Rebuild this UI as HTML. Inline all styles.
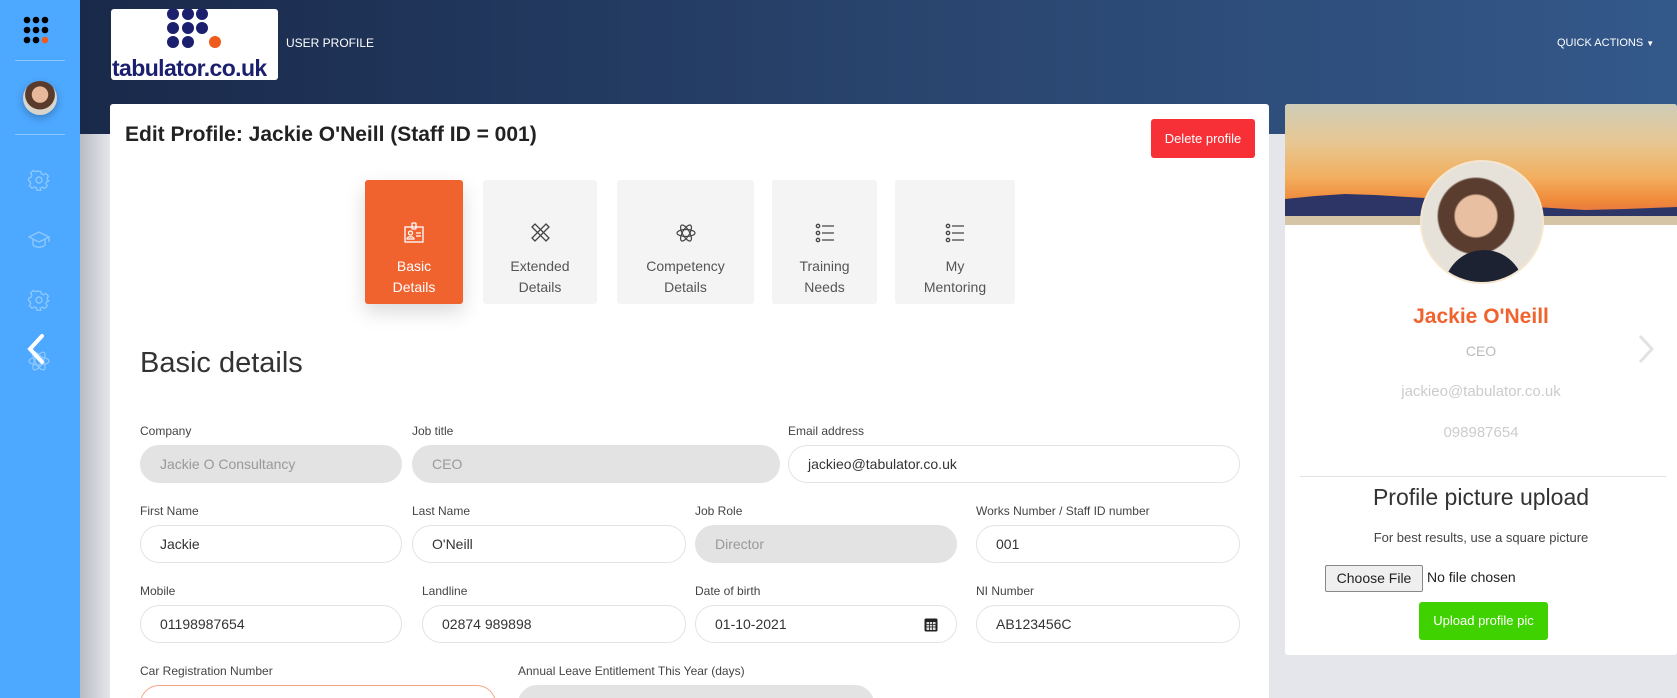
<!DOCTYPE html>
<html style="overflow:hidden;width:1677px;height:698px"><head><meta charset="utf-8"><style>
*{box-sizing:border-box;margin:0;padding:0}
body{width:1677px;height:698px;overflow:hidden;background:#e4e6eb;font-family:"Liberation Sans",sans-serif;color:#333}
#w{position:relative;width:1677px;height:698px;overflow:hidden}
.abs{position:absolute}
.side{left:0;top:0;width:80px;height:698px;background:#4da8ff}
.hdr{left:80px;top:0;width:1597px;height:134px;background:linear-gradient(90deg,#19294a,#2a4670 55%,#33588a)}
.card{background:#fff;border-radius:3px}
.lbl{font-size:12px;color:#444}
.inp{height:38px;border:1px solid #e3e3e3;border-radius:19px;font-size:14px;color:#333;padding-left:19px;line-height:36px;background:#fff}
.dis{background:#e3e3e3;border-color:#e3e3e3;color:#999}
.tab{top:180px;height:124px;background:#f4f4f4;border-radius:3px;text-align:center;font-size:14px;color:#555;line-height:21px}
.tab svg{display:block;margin:42px auto 12px}
</style></head><body><div id="w">
<div class="abs side"></div>
<svg class="abs" style="left:22px;top:16px" width="30" height="30">
<g fill="#000"><circle cx="5" cy="4" r="3.3"/><circle cx="14" cy="4" r="3.3"/><circle cx="23" cy="4" r="3.3"/><circle cx="5" cy="14" r="3.3"/><circle cx="14" cy="14" r="3.3"/><circle cx="23" cy="14" r="3.3"/><circle cx="5" cy="24" r="3.3"/><circle cx="14" cy="24" r="3.3"/></g><circle cx="23" cy="24" r="3.3" fill="#f05a1a"/></svg>
<div class="abs" style="left:15px;top:60px;width:50px;height:1px;background:#8cc6ff"></div>
<div class="abs" style="left:23px;top:81px;width:34px;height:34px;border-radius:50%;background:radial-gradient(circle at 50% 40%,#e8b89a 0 30%,#5a3a2a 32% 55%,#d9d4cc 57%);box-shadow:0 3px 8px rgba(0,0,0,.25)"></div>
<div class="abs" style="left:15px;top:134px;width:50px;height:1px;background:#8cc6ff"></div>
<svg class="abs" style="left:28px;top:169px" width="22" height="22" fill="none" stroke="#8fc8ff" stroke-width="1.4"><circle cx="11" cy="11" r="3"/><path d="M9 2h4l.6 2.6 2.3 1 2.3-1.4 2.8 2.8-1.4 2.3 1 2.3L22 12v0l-2.6.6-1 2.3 1.4 2.3-2.8 2.8-2.3-1.4-2.3 1L13 22H9l-.6-2.6-2.3-1-2.3 1.4-2.8-2.8 1.4-2.3-1-2.3L0 11.6V9l2.6-.6 1-2.3-1.4-2.3 2.8-2.8 2.3 1.4 2.3-1z" transform="scale(.95) translate(.5 .5)"/></svg>
<svg class="abs" style="left:28px;top:229px" width="22" height="22" fill="none" stroke="#8fc8ff" stroke-width="1.4"><path d="M1 8l10-5 10 5-10 5z M5 10v6c3 3 9 3 12 0v-6 M21 8v5"/></svg>
<svg class="abs" style="left:28px;top:289px" width="22" height="22" fill="none" stroke="#8fc8ff" stroke-width="1.4"><circle cx="11" cy="11" r="3"/><path d="M9 2h4l.6 2.6 2.3 1 2.3-1.4 2.8 2.8-1.4 2.3 1 2.3L22 12v0l-2.6.6-1 2.3 1.4 2.3-2.8 2.8-2.3-1.4-2.3 1L13 22H9l-.6-2.6-2.3-1-2.3 1.4-2.8-2.8 1.4-2.3-1-2.3L0 11.6V9l2.6-.6 1-2.3-1.4-2.3 2.8-2.8 2.3 1.4 2.3-1z" transform="scale(.95) translate(.5 .5)"/></svg>
<svg class="abs" style="left:28px;top:350px" width="22" height="22" fill="none" stroke="#8fc8ff" stroke-width="1.3"><ellipse cx="11" cy="11" rx="10" ry="4"/><ellipse cx="11" cy="11" rx="10" ry="4" transform="rotate(60 11 11)"/><ellipse cx="11" cy="11" rx="10" ry="4" transform="rotate(120 11 11)"/></svg>
<svg class="abs" style="left:25px;top:333px" width="22" height="32" fill="none" stroke="#fff" stroke-width="4" stroke-linecap="round"><path d="M17 3L5 16l12 13"/></svg>

<div class="abs hdr"></div>
<div class="abs" style="left:80px;top:134px;width:30px;height:564px;background:linear-gradient(90deg,#b9bcc4,#e4e6eb)"></div>
<div class="abs" style="left:111px;top:9px;width:167px;height:71px;background:#fff;border-radius:3px;overflow:hidden">
<svg width="167" height="71" style="position:absolute;left:0;top:0"><g fill="#1b1f6e"><circle cx="62" cy="5" r="6"/><circle cx="77" cy="5" r="6"/><circle cx="91" cy="5" r="6"/><circle cx="62" cy="19" r="6"/><circle cx="77" cy="19" r="6"/><circle cx="91" cy="19" r="6"/><circle cx="62" cy="33" r="6"/><circle cx="77" cy="33" r="6"/></g><circle cx="104" cy="33" r="6" fill="#f05a1a"/></svg>
<div style="position:absolute;left:1px;top:46px;font-size:23px;font-weight:bold;color:#1b1f6e;letter-spacing:-0.6px;white-space:nowrap">tabulator.co.uk</div>
</div>
<div class="abs" style="left:286px;top:36px;font-size:12px;color:#fff">USER PROFILE</div>
<div class="abs" style="left:1557px;top:37px;font-size:11px;color:#fff">QUICK ACTIONS <span style="font-size:8px">▼</span></div>

<div class="abs card" style="left:110px;top:104px;width:1159px;height:600px"></div>
<div class="abs" style="left:125px;top:123px;font-size:21px;font-weight:bold;color:#222">Edit Profile: Jackie O'Neill (Staff ID = 001)</div>
<div class="abs" style="left:1151px;top:119px;width:104px;height:39px;background:#f72f37;border-radius:3px;color:#fff;font-size:13px;text-align:center;line-height:39px">Delete profile</div>

<div class="abs tab" style="left:365px;width:98px;background:#f0632f;color:#fff;box-shadow:0 8px 20px rgba(0,0,0,.15)"><svg width="22" height="22" fill="none" stroke="#fff" stroke-width="1.3"><rect x="2" y="5" width="18" height="15"/><rect x="9" y="1" width="4" height="6" rx="1"/><circle cx="7.5" cy="11" r="2"/><path d="M4 17c0-3 7-3 7 0z M13 11h5M13 14h5"/></svg>Basic<br>Details</div>
<div class="abs tab" style="left:483px;width:114px"><svg width="22" height="22" fill="none" stroke="#444" stroke-width="1.3"><path d="M3 5l3-3 14 14-3 3z M17 2l3 3-14 14-3-3z"/></svg>Extended<br>Details</div>
<div class="abs tab" style="left:617px;width:137px"><svg width="22" height="22" fill="none" stroke="#444" stroke-width="1.2"><ellipse cx="11" cy="11" rx="9" ry="3.5"/><ellipse cx="11" cy="11" rx="9" ry="3.5" transform="rotate(60 11 11)"/><ellipse cx="11" cy="11" rx="9" ry="3.5" transform="rotate(120 11 11)"/></svg>Competency<br>Details</div>
<div class="abs tab" style="left:772px;width:105px"><svg width="22" height="22" fill="none" stroke="#444" stroke-width="1.3"><circle cx="4" cy="4" r="1.7"/><circle cx="4" cy="11" r="1.7"/><circle cx="4" cy="18" r="1.7"/><path d="M8 4h12M8 11h12M8 18h12"/></svg>Training<br>Needs</div>
<div class="abs tab" style="left:895px;width:120px"><svg width="22" height="22" fill="none" stroke="#444" stroke-width="1.3"><circle cx="4" cy="4" r="1.7"/><circle cx="4" cy="11" r="1.7"/><circle cx="4" cy="18" r="1.7"/><path d="M8 4h12M8 11h12M8 18h12"/></svg>My<br>Mentoring</div>

<div class="abs" style="left:140px;top:347px;font-size:29px;color:#333">Basic details</div>

<div class="abs lbl" style="left:140px;top:424px">Company</div>
<div class="abs lbl" style="left:412px;top:424px">Job title</div>
<div class="abs lbl" style="left:788px;top:424px">Email address</div>
<div class="abs inp dis" style="left:140px;top:445px;width:262px">Jackie O Consultancy</div>
<div class="abs inp dis" style="left:412px;top:445px;width:368px">CEO</div>
<div class="abs inp" style="left:788px;top:445px;width:452px">jackieo@tabulator.co.uk</div>

<div class="abs lbl" style="left:140px;top:504px">First Name</div>
<div class="abs lbl" style="left:412px;top:504px">Last Name</div>
<div class="abs lbl" style="left:695px;top:504px">Job Role</div>
<div class="abs lbl" style="left:976px;top:504px">Works Number / Staff ID number</div>
<div class="abs inp" style="left:140px;top:525px;width:262px">Jackie</div>
<div class="abs inp" style="left:412px;top:525px;width:274px">O'Neill</div>
<div class="abs inp dis" style="left:695px;top:525px;width:262px">Director</div>
<div class="abs inp" style="left:976px;top:525px;width:264px">001</div>

<div class="abs lbl" style="left:140px;top:584px">Mobile</div>
<div class="abs lbl" style="left:422px;top:584px">Landline</div>
<div class="abs lbl" style="left:695px;top:584px">Date of birth</div>
<div class="abs lbl" style="left:976px;top:584px">NI Number</div>
<div class="abs inp" style="left:140px;top:605px;width:262px">01198987654</div>
<div class="abs inp" style="left:422px;top:605px;width:264px">02874 989898</div>
<div class="abs inp" style="left:695px;top:605px;width:262px">01-10-2021<svg style="position:absolute;right:18px;top:11px" width="14" height="15"><rect x="0.5" y="1.5" width="13" height="13" rx="1.5" fill="#222"/><rect x="2.5" y="5" width="9" height="8" fill="#ddd"/><path d="M2.5 7.5h9M2.5 10h9M5.5 5v8M8.5 5v8" stroke="#222" stroke-width=".8"/></svg></div>
<div class="abs inp" style="left:976px;top:605px;width:264px">AB123456C</div>

<div class="abs lbl" style="left:140px;top:664px">Car Registration Number</div>
<div class="abs lbl" style="left:518px;top:664px">Annual Leave Entitlement This Year (days)</div>
<div class="abs inp" style="left:140px;top:685px;width:356px;border-color:#f5a58a"></div>
<div class="abs inp dis" style="left:518px;top:685px;width:356px"></div>

<div class="abs card" style="left:1285px;top:104px;width:392px;height:551px;overflow:hidden">
<div style="position:absolute;left:0;top:0;width:392px;height:121px;background:linear-gradient(180deg,#cfcdb8 0%,#e6c896 30%,#f2b060 60%,#f08a3a 80%,#e87a40 88%)"></div>
<svg style="position:absolute;left:0;top:70px" width="392" height="51"><path d="M0 25 L30 22 L60 20 L90 21 L140 24 L200 28 L250 33 L300 36 L340 35 L392 33 V45 H0z" fill="#2d3566"/><rect x="0" y="42" width="392" height="9" fill="#d6c4a6"/></svg>
</div>
<div class="abs" style="left:1420px;top:160px;width:124px;height:124px;border-radius:50%;border:2px solid #f5e6d0;background:radial-gradient(ellipse at 45% 45%,#e9bfa2 0 22%,#5a3d2e 24% 40%,#e6e2da 42%);overflow:hidden"><div style="position:absolute;left:22px;top:88px;width:80px;height:40px;border-radius:40px 40px 0 0;background:#1d2233"></div></div>
<div class="abs" style="left:1285px;top:305px;width:392px;text-align:center;font-size:21px;font-weight:bold;color:#f0632f">Jackie O'Neill</div>
<div class="abs" style="left:1285px;top:343px;width:392px;text-align:center;font-size:14px;color:#bbb">CEO</div>
<div class="abs" style="left:1285px;top:383px;width:392px;text-align:center;font-size:15px;color:#ccc">jackieo@tabulator.co.uk</div>
<div class="abs" style="left:1285px;top:424px;width:392px;text-align:center;font-size:15px;color:#ccc">098987654</div>
<svg class="abs" style="left:1636px;top:334px" width="20" height="30" fill="none" stroke="#e2e2e2" stroke-width="3"><path d="M4 2l12 13L4 28"/></svg>
<div class="abs" style="left:1300px;top:476px;width:366px;height:1px;background:#e3e3e3"></div>
<div class="abs" style="left:1285px;top:484px;width:392px;text-align:center;font-size:23px;color:#333">Profile picture upload</div>
<div class="abs" style="left:1285px;top:530px;width:392px;text-align:center;font-size:13px;color:#444">For best results, use a square picture</div>
<div class="abs" style="left:1325px;top:565px;width:98px;height:27px;border:1px solid #888;border-radius:2px;background:#efefef;font-size:14px;text-align:center;line-height:25px;color:#222">Choose File</div>
<div class="abs" style="left:1427px;top:569px;font-size:14px;color:#222">No file chosen</div>
<div class="abs" style="left:1419px;top:602px;width:129px;height:38px;background:#3fd100;border-radius:3px;color:#fff;font-size:13px;text-align:center;line-height:38px">Upload profile pic</div>
</div></body></html>
